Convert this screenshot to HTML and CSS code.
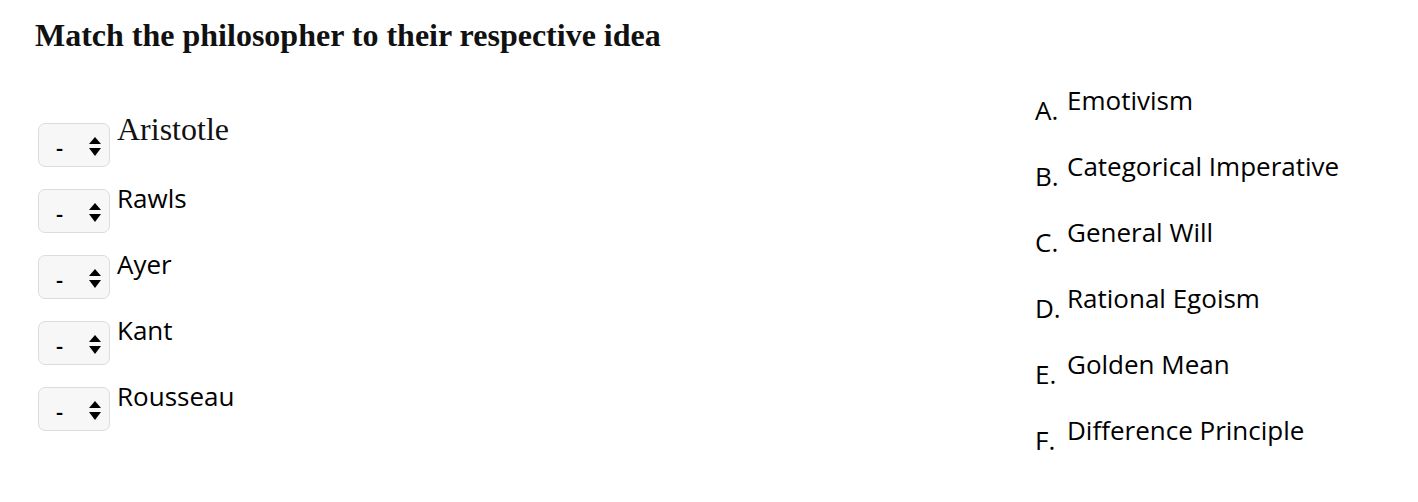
FILE: index.html
```html
<!DOCTYPE html>
<html>
	<head>
		<meta charset="UTF-8">
		<title>Matching question</title>
		<link rel="stylesheet" href="styles.css">
	</head>
	<body>
		<div class="question">
			<h2 class="question-title">Match the philosopher to their respective idea</h2>
			<div class="match">
				<ul class="terms">
					<li class="term">
						<span class="picker">
							<select><option>-</option><option>A</option><option>B</option><option>C</option><option>D</option><option>E</option><option>F</option></select>
							<svg class="picker-arrows" width="12" height="19" viewBox="0 0 12 19"><polygon points="6,0 12,7 0,7"/><polygon points="0,11 12,11 6,19"/></svg>
						</span>
						<span class="term-label serif">Aristotle</span>
					</li>
					<li class="term">
						<span class="picker">
							<select><option>-</option><option>A</option><option>B</option><option>C</option><option>D</option><option>E</option><option>F</option></select>
							<svg class="picker-arrows" width="12" height="19" viewBox="0 0 12 19"><polygon points="6,0 12,7 0,7"/><polygon points="0,11 12,11 6,19"/></svg>
						</span>
						<span class="term-label">Rawls</span>
					</li>
					<li class="term">
						<span class="picker">
							<select><option>-</option><option>A</option><option>B</option><option>C</option><option>D</option><option>E</option><option>F</option></select>
							<svg class="picker-arrows" width="12" height="19" viewBox="0 0 12 19"><polygon points="6,0 12,7 0,7"/><polygon points="0,11 12,11 6,19"/></svg>
						</span>
						<span class="term-label">Ayer</span>
					</li>
					<li class="term">
						<span class="picker">
							<select><option>-</option><option>A</option><option>B</option><option>C</option><option>D</option><option>E</option><option>F</option></select>
							<svg class="picker-arrows" width="12" height="19" viewBox="0 0 12 19"><polygon points="6,0 12,7 0,7"/><polygon points="0,11 12,11 6,19"/></svg>
						</span>
						<span class="term-label">Kant</span>
					</li>
					<li class="term">
						<span class="picker">
							<select><option>-</option><option>A</option><option>B</option><option>C</option><option>D</option><option>E</option><option>F</option></select>
							<svg class="picker-arrows" width="12" height="19" viewBox="0 0 12 19"><polygon points="6,0 12,7 0,7"/><polygon points="0,11 12,11 6,19"/></svg>
						</span>
						<span class="term-label">Rousseau</span>
					</li>
				</ul>
				<ol class="ideas">
					<li class="idea"><span class="idea-letter">A.</span><span class="idea-text">Emotivism</span></li>
					<li class="idea"><span class="idea-letter">B.</span><span class="idea-text">Categorical Imperative</span></li>
					<li class="idea"><span class="idea-letter">C.</span><span class="idea-text">General Will</span></li>
					<li class="idea"><span class="idea-letter">D.</span><span class="idea-text">Rational Egoism</span></li>
					<li class="idea"><span class="idea-letter">E.</span><span class="idea-text">Golden Mean</span></li>
					<li class="idea"><span class="idea-letter">F.</span><span class="idea-text">Difference Principle</span></li>
				</ol>
			</div>
		</div>
	</body>
</html>
```

FILE: styles.css
```css
*{
	margin: 0;
	padding: 0;
}
body{
	background: #fff;
	color: #000;
	font-family: "Open Sans", "Liberation Sans", sans-serif;
}
.question{
	padding: 16px 0 0 35px;
}
.question-title{
	font-family: "Liberation Serif", serif;
	font-size: 32px;
	line-height: 38px;
	font-weight: bold;
	color: #111;
}
.match{
	display: grid;
	grid-template-columns: 1000px 1fr;
	margin-top: 30px;
}
.terms, .ideas{
	list-style: none;
}
/* left column: dropdown + name */
.terms{
	display: flex;
	flex-direction: column;
	gap: 22px;
	padding: 39px 0 0 3px;
}
.term{
	display: flex;
	align-items: flex-start;
	gap: 7px;
}
.term-label{
	font-size: 26px;
	line-height: 18px;
}
.term-label.serif{
	font-family: "Liberation Serif", serif;
	font-size: 32px;
	line-height: 13px;
	color: #111;
}
.picker{
	position: relative;
	display: block;
	width: 72px;
	height: 44px;
}
.picker select{
	-webkit-appearance: none;
	appearance: none;
	width: 100%;
	height: 100%;
	padding: 4px 0 0 17px;
	border: 1px solid #dcdcdc;
	border-radius: 7px;
	background: #f7f7f7;
	color: #000;
	font-family: "Open Sans", sans-serif;
	font-size: 22px;
	font-weight: 600;
	outline: none;
}
.picker-arrows{
	position: absolute;
	top: 14px;
	right: 9px;
	fill: #000;
	pointer-events: none;
}
/* right column: lettered ideas */
.ideas{
	display: flex;
	flex-direction: column;
	gap: 23px;
}
.idea{
	display: flex;
	align-items: flex-start;
	gap: 8px;
	font-size: 26px;
	line-height: 33px;
}
.idea-letter{
	width: 24px;
	margin-top: 10px;
}
```
